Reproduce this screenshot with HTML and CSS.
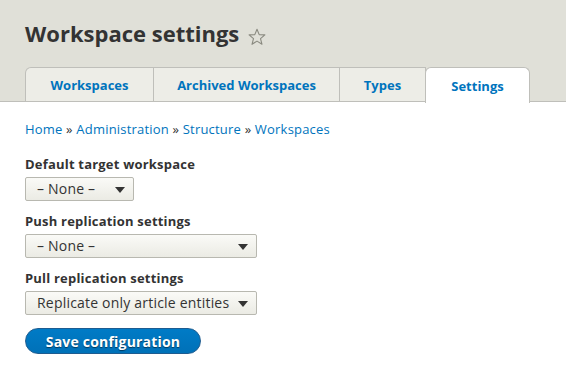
FILE: index.html
```html
<!DOCTYPE html>
<html>
<head>
<meta charset="utf-8">
<link rel="stylesheet" href="styles.css">
</head>
<body>
<div class="header">
  <h1 class="title">Workspace settings <span class="star"><svg width="18" height="18" viewBox="0 0 18 18"><path d="M9 1.2 L11.2 6.6 L16.9 6.9 L12.5 10.6 L14 16.3 L9 13.1 L4 16.3 L5.5 10.6 L1.1 6.9 L6.8 6.6 Z" fill="none" stroke="#8a8a80" stroke-width="1.1" stroke-linejoin="round"/></svg></span></h1>
  <ul class="tabs">
    <li class="tab t1"><a href="#">Workspaces</a></li>
    <li class="tab t2"><a href="#">Archived Workspaces</a></li>
    <li class="tab t3"><a href="#">Types</a></li>
    <li class="tab t4 active"><a href="#">Settings</a></li>
  </ul>
</div>
<div class="content">
  <div class="breadcrumb"><a href="#">Home</a> » <a href="#">Administration</a> » <a href="#">Structure</a> » <a href="#">Workspaces</a></div>
  <div class="field">
    <label>Default target workspace</label>
    <div class="sel w1"><span>– None –</span></div>
  </div>
  <div class="field">
    <label>Push replication settings</label>
    <div class="sel w2"><span>– None –</span></div>
  </div>
  <div class="field">
    <label>Pull replication settings</label>
    <div class="sel w2"><span>Replicate only article entities</span></div>
  </div>
  <button class="btn">Save configuration</button>
</div>
</body>
</html>
```
FILE: styles.css
```css
html, body { margin: 0; padding: 0; background: #fff; }
body { font-family: "Open Sans", "DejaVu Sans", sans-serif; color: #333; font-size: 13px; width: 566px; height: 384px; overflow: hidden; }
a { color: #0074bd; text-decoration: none; }
.header { background: #e0e0d8; padding: 18px 0 0 0; border-bottom: 1px solid #bfbfba; height: 83px; box-sizing: content-box; }
.title { margin: 0 0 0 25px; font-size: 22px; font-weight: bold; color: #333; line-height: 30px; height: 49px; display: flex; align-items: flex-start; letter-spacing: 0px; }
.star { margin-left: 9px; margin-top: 4px; display: inline-block; }
.tabs { list-style: none; margin: 0 0 0 25px; padding: 0; display: flex; height: 34px; }
.tab { background: #ededE7; border: 1px solid #bfbfba; border-bottom: none; border-left: none; display: flex; align-items: center; justify-content: center; font-weight: bold; font-size: 13px; }
.tab.t1 { border-left: 1px solid #bfbfba; border-top-left-radius: 6px; width: 127px; }
.tab.t2 { width: 185px; }
.tab.t3 { width: 85px; }
.tab.t4 { width: 103px; }
.tab.active { background: #fff; border-top-left-radius: 6px; border-top-right-radius: 6px; border-left: 1px solid #bfbfba; margin-left: -1px; height: 35px; position: relative; z-index: 1; }
.tab a { color: #0074bd; }
.content { padding: 19px 25px 0 25px; }
.breadcrumb { font-size: 13px; line-height: 16px; color: #333; letter-spacing: 0.2px; }
.field { margin-top: 19px; }
.field + .field { margin-top: 12px; }
label { display: block; font-weight: bold; font-size: 13px; line-height: 16px; margin-bottom: 5px; letter-spacing: 0.2px; }
.sel { position: relative; height: 24px; box-sizing: border-box; border: 1px solid #b8b8b0; border-radius: 2px; background: linear-gradient(#fafaf7, #ebebe4); font-size: 14px; line-height: 22px; padding-left: 11px; color: #333; letter-spacing: 0.2px; }
.sel::after { content: ""; position: absolute; right: 8px; top: 9px; border-left: 5px solid transparent; border-right: 5px solid transparent; border-top: 6px solid #333; }
.w1 { width: 109px; }
.w2 { width: 232px; }
.btn { margin-top: 13px; width: 176px; height: 26px; border-radius: 14px; border: 1px solid #1e5c90; background: linear-gradient(#007bc6, #0071b8); color: #fff; font-family: "Open Sans", sans-serif; font-weight: bold; font-size: 14px; letter-spacing: 0.2px; text-shadow: 0 1px 1px rgba(0,0,0,0.5); padding: 0; display: block; }
```
